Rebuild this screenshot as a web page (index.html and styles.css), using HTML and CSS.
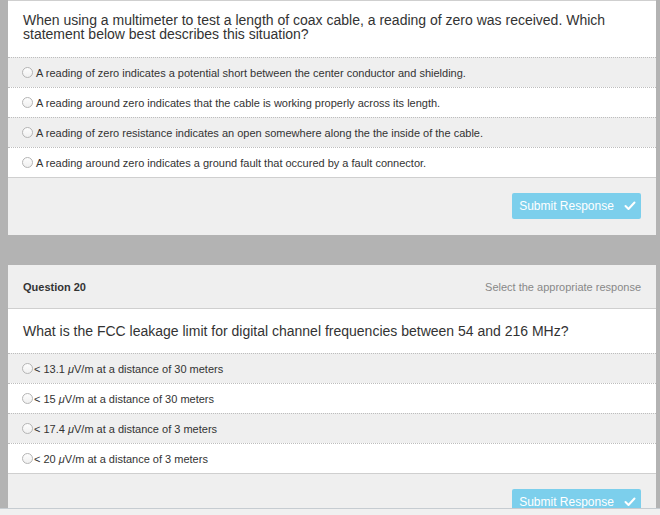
FILE: index.html
```html
<!DOCTYPE html>
<html lang="en">
<head>
<meta charset="utf-8">
<title>Quiz</title>
<link rel="stylesheet" href="styles.css">
</head>
<body>
<div class="page">
  <section class="card card--cut">
    <div class="question">When using a multimeter to test a length of coax cable, a reading of zero was received. Which statement below best describes this situation?</div>
    <ul class="options">
      <li class="option"><span class="radio"></span><span>A reading of zero indicates a potential short between the center conductor and shielding.</span></li>
      <li class="option"><span class="radio"></span><span>A reading around zero indicates that the cable is working properly across its length.</span></li>
      <li class="option"><span class="radio"></span><span>A reading of zero resistance indicates an open somewhere along the the inside of the cable.</span></li>
      <li class="option"><span class="radio"></span><span>A reading around zero indicates a ground fault that occured by a fault connector.</span></li>
    </ul>
    <div class="footer">
      <button class="submit">Submit Response <svg class="check" width="12" height="10" viewBox="0 0 12 10"><polyline points="1.5,5 4.5,8 10.5,1.5" fill="none" stroke="#fff" stroke-width="2" stroke-linecap="round" stroke-linejoin="round"/></svg></button>
    </div>
  </section>

  <section class="card">
    <header class="card-head">
      <span class="q-num">Question 20</span>
      <span class="q-hint">Select the appropriate response</span>
    </header>
    <div class="question">What is the FCC leakage limit for digital channel frequencies between 54 and 216 MHz?</div>
    <ul class="options options--tight">
      <li class="option"><span class="radio"></span><span>&lt; 13.1 <i>μ</i>V/m at a distance of 30 meters</span></li>
      <li class="option"><span class="radio"></span><span>&lt; 15 <i>μ</i>V/m at a distance of 30 meters</span></li>
      <li class="option"><span class="radio"></span><span>&lt; 17.4 <i>μ</i>V/m at a distance of 3 meters</span></li>
      <li class="option"><span class="radio"></span><span>&lt; 20 <i>μ</i>V/m at a distance of 3 meters</span></li>
    </ul>
    <div class="footer">
      <button class="submit">Submit Response <svg class="check" width="12" height="10" viewBox="0 0 12 10"><polyline points="1.5,5 4.5,8 10.5,1.5" fill="none" stroke="#fff" stroke-width="2" stroke-linecap="round" stroke-linejoin="round"/></svg></button>
    </div>
  </section>
</div>
<div class="bottom-bar"></div>
</body>
</html>
```

FILE: styles.css
```css
html, body {
  margin: 0;
  padding: 0;
  background: #b3b3b3;
  font-family: "Liberation Sans", Helvetica, Arial, sans-serif;
  color: #333;
}

.page {
  padding: 0 4px 40px 8px;
  display: flex;
  flex-direction: column;
  gap: 30px;
}

.card {
  background: #efefef;
  width: 648px;
}

.card--cut {
  border-top: 1px solid #cfcfcf;
}

.card-head {
  height: 43px;
  display: flex;
  align-items: center;
  justify-content: space-between;
  padding: 0 15px;
  border-bottom: 1px solid #cfcfcf;
  font-size: 11px;
}

.q-num {
  font-weight: bold;
  color: #333;
}

.q-hint {
  color: #888;
}

.question {
  background: #fff;
  font-size: 14px;
  line-height: 14px;
  padding: 12px 15px 16px;
  color: #333;
}

.card-head + .question {
  padding-top: 15px;
  padding-bottom: 15px;
}

.options {
  list-style: none;
  margin: 0;
  padding: 0;
  border-bottom: 1px solid #cfcfcf;
}

.option {
  height: 29px;
  border-top: 1px dotted #bdbdbd;
  display: flex;
  align-items: center;
  padding-left: 14px;
  font-size: 11px;
  color: #333;
  background: #fff;
}

.option:nth-child(odd) {
  background: #efefef;
}

.radio {
  width: 9px;
  height: 9px;
  border: 1px solid #b5b5b5;
  border-radius: 50%;
  background: linear-gradient(#fdfdfd, #f0f0f0);
  margin-right: 3px;
  flex: none;
}

.options--tight .radio {
  margin-right: 1px;
}

.option i {
  font-style: italic;
}

.footer {
  display: flex;
  justify-content: flex-end;
  padding: 15px 15px 16px;
}

.submit {
  width: 129px;
  height: 26px;
  border: none;
  border-radius: 2px;
  background: #7ccfec;
  color: #fff;
  font-family: "Liberation Sans", Helvetica, Arial, sans-serif;
  font-size: 12px;
  display: flex;
  align-items: center;
  justify-content: center;
  gap: 10px;
  padding: 0 0 0 2px;
}

.check {
  display: block;
}

.bottom-bar {
  position: fixed;
  left: 0;
  right: 0;
  bottom: 0;
  height: 6px;
  background: #f0f0f0;
  border-top: 1px solid #c6ccd1;
}
```
